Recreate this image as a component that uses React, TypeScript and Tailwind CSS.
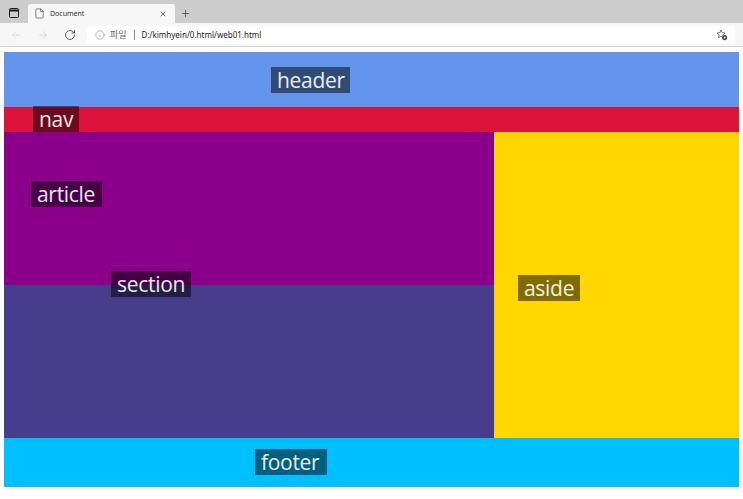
import React from "react";
import { ArrowLeft, ArrowRight, File, Info, Plus, RotateCw, X } from "lucide-react";

const labelBase =
  "inline-block h-[26px] px-[6px] bg-black/50 text-white/90 text-[21px] tracking-[-0.3px] leading-[27px] font-['Open_Sans','Liberation_Sans',sans-serif]";

function Label({ text, className }: { text: string; className: string }) {
  return <div className={`${labelBase} ${className}`}>{text}</div>;
}

function BrowserBar() {
  return (
    <div className="font-['Noto_Sans','Noto_Sans_CJK_KR',sans-serif]">
      {/* Tab strip */}
      <div className="flex h-[23px] bg-[#cdcdcd]">
        <div className="flex w-[28px] items-end pb-[5px] pl-[9px]">
          <svg width="10" height="10" viewBox="0 0 10 10" fill="none" stroke="#1f1f1f" strokeWidth="1">
            <rect x="0.5" y="0.5" width="9" height="9" rx="1" />
            <path d="M0.5 2.5h9" strokeWidth="2" />
          </svg>
        </div>
        <div className="mt-[4px] flex w-[147px] items-center rounded-t-[3px] bg-[#f7f7f7] pl-[6px] pr-[8px]">
          <File size={11} strokeWidth={1.3} className="text-[#333]" />
          <span className="ml-[5px] mt-[1px] flex-1 text-[7px] text-[#333]">Document</span>
          <X size={8} strokeWidth={2} className="text-[#222]" />
        </div>
        <div className="ml-[5px] flex items-center pt-[3px]">
          <Plus size={11} strokeWidth={1.3} className="text-[#222]" />
        </div>
      </div>
      {/* Toolbar */}
      <div className="flex h-[24px] items-center border-b border-[#d2d2d2] bg-[#f7f7f7] pl-[10px] pr-[8px]">
        <ArrowLeft size={12} strokeWidth={1.2} className="text-[#c9c9c9]" />
        <ArrowRight size={12} strokeWidth={1.2} className="ml-[15px] text-[#c9c9c9]" />
        <RotateCw size={12} strokeWidth={1.4} className="ml-[15px] text-[#222]" />
        <div className="ml-[11px] mt-[1px] flex h-[18px] flex-1 items-center rounded-[3px] bg-white pl-[8px] pr-[7px]">
          <Info size={10} strokeWidth={1} className="text-[#555]" />
          <span className="ml-[5px] text-[9px] text-[#666]">파일</span>
          <div className="ml-[7px] h-[10px] w-px bg-[#888]" />
          <span className="ml-[7px] flex-1 text-[8px] text-[#222]">D:/kimhyein/0.html/web01.html</span>
          <svg width="12" height="12" viewBox="0 0 12 12" fill="none">
            <path
              d="M5 1l1.2 2.7 2.9.3-2.2 1.9.6 2.9L5 7.3 2.5 8.8l.6-2.9L1 4l2.9-.3z"
              stroke="#555"
              strokeWidth="0.8"
              strokeLinejoin="round"
            />
            <circle cx="8.6" cy="8.6" r="2.6" fill="#555" />
            <circle cx="8.6" cy="8.6" r="0.9" fill="#fff" />
          </svg>
        </div>
      </div>
    </div>
  );
}

export default function App() {
  return (
    <div className="h-[499px] w-[743px] overflow-hidden bg-white">
      <BrowserBar />
      <div className="ml-[4px] mt-[5px] w-[735px]">
        <header className="h-[55px] bg-[#6495ed] pl-[267px] pt-[15px]">
          <Label text="header" className="w-[79px]" />
        </header>
        <nav className="h-[25px] bg-[#dc143c] pl-[29px]">
          <Label text="nav" className="-mt-[1px] w-[46px] align-top" />
        </nav>
        <div className="flex">
          <div className="w-[490px]">
            <article className="h-[153px] bg-[#8b008b] pl-[27px] pt-[49px]">
              <Label text="article" className="w-[71px]" />
            </article>
            <section className="h-[153px] bg-[#483d8b] pl-[107px]">
              <Label text="section" className="-mt-[14px] w-[80px] align-top" />
            </section>
          </div>
          <aside className="flex-1 bg-[#ffd700] pl-[24px] pt-[143px]">
            <Label text="aside" className="w-[62px]" />
          </aside>
        </div>
        <footer className="h-[49px] bg-[#00bfff] pl-[251px] pt-[11px]">
          <Label text="footer" className="w-[72px]" />
        </footer>
      </div>
    </div>
  );
}
